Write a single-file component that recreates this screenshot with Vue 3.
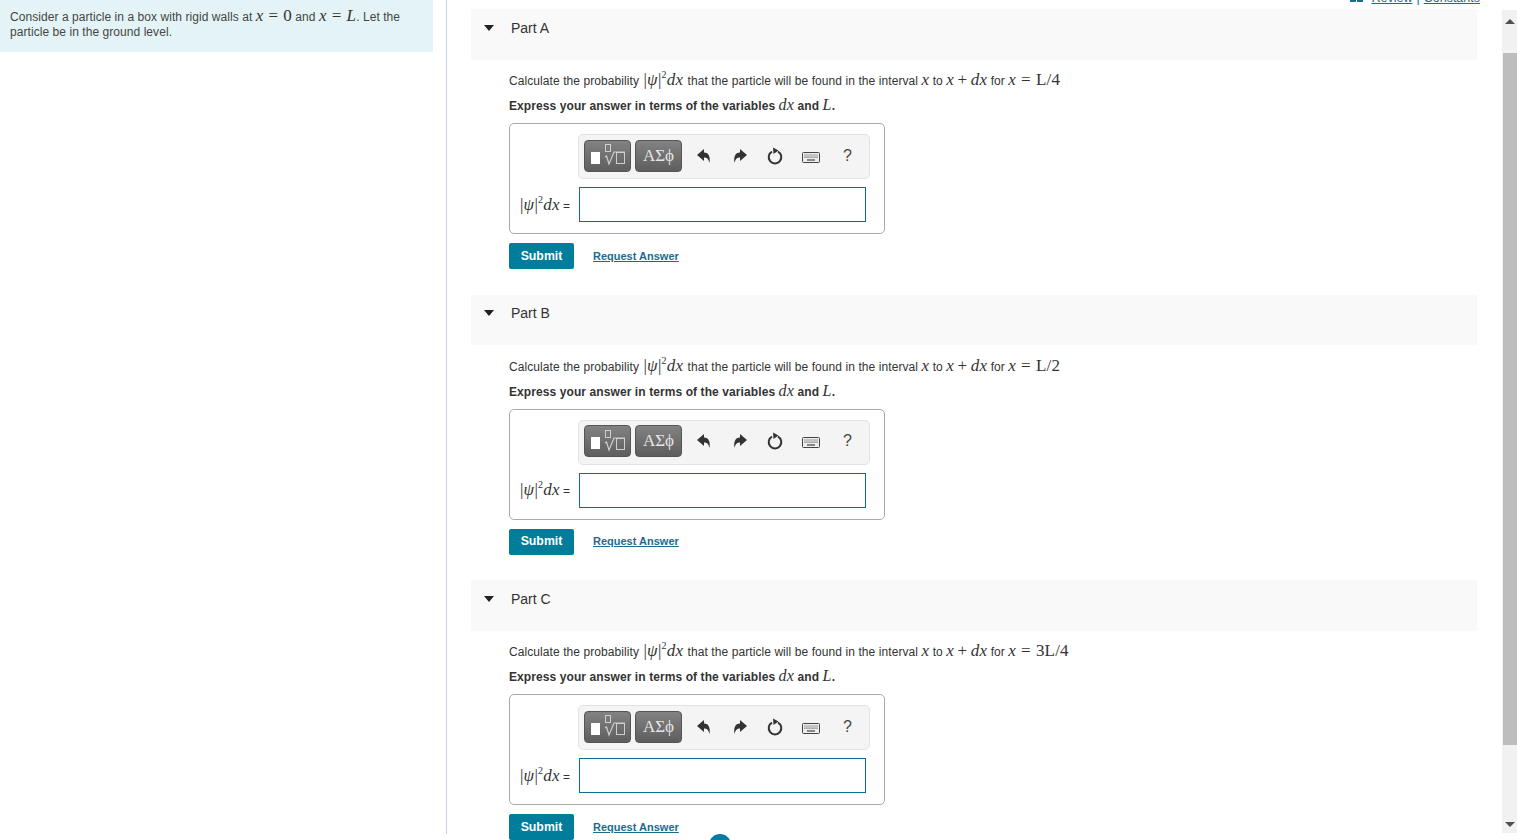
<script setup>
const parts = [
  { label: 'Part A', value: 'L/4' },
  { label: 'Part B', value: 'L/2' },
  { label: 'Part C', value: '3L/4' },
]
</script>

<template>
  <div class="page">
    <aside class="left">
      <div class="intro">
        Consider a particle in a box with rigid walls at
        <span class="m"><i>x</i><span class="op eq">=</span>0</span> and
        <span class="m"><i>x</i><span class="op eq">=</span><i>L</i></span>. Let the
        particle be in the ground level.
      </div>
    </aside>

    <main class="right">
      <div class="toplinks">
        <svg class="book" width="13" height="8" viewBox="0 0 13 8"><path d="M0 1h6v7H0zM7 1h6v7H7z" fill="#1a6d8c" /></svg>
        <a>Review</a><span class="sep">|</span><a>Constants</a>
      </div>

      <section v-for="part in parts" :key="part.label" class="part">
        <header class="part-head">
          <span class="caret"></span>
          <span class="part-title">{{ part.label }}</span>
        </header>

        <div class="part-body">
          <p class="question">
            Calculate the probability
            <span class="m big">|<i>ψ</i>|<sup>2</sup><i>dx</i></span>
            that the particle will be found in the interval
            <span class="m"><i>x</i></span> to
            <span class="m"><i>x</i><span class="op">+</span><i>dx</i></span> for
            <span class="m"><i>x</i><span class="op eq">=</span>{{ part.value }}</span>
          </p>
          <p class="express">
            Express your answer in terms of the variables
            <span class="m"><i>dx</i></span> and <span class="m"><i>L</i></span>.
          </p>

          <div class="answer-box">
            <div class="toolbar">
              <button class="tool-btn templ">
                <span class="white-sq"></span>
                <svg width="26" height="25" viewBox="0 0 26 25" fill="none" stroke="#cfcfcf">
                  <rect x="5.500" y="1.500" width="5" height="7" />
                  <path d="M5 14l1.500-1 2.500 8 5-12h11" stroke-width="1.200" />
                  <rect x="16.500" y="9.500" width="8" height="11" />
                </svg>
              </button>
              <button class="tool-btn greek">ΑΣϕ</button>

              <svg class="ic undo" width="14" height="14" viewBox="0 0 14 14"><path d="M7 0L0 6l7 6V8.500c2.500 0 4.500 1 5.500 5.500 1-5.500-.5-10.500-5.500-10.500z" fill="#333" /></svg>
              <svg class="ic redo" width="14" height="14" viewBox="0 0 14 14"><path d="M7 0l7 6-7 6V8.500c-2.500 0-4.500 1-5.500 5.500C.5 8.500 2 3.500 7 3.500z" fill="#333" /></svg>
              <svg class="ic reset" width="16" height="18" viewBox="0 0 16 18" fill="none">
                <path d="M5 4.600A6.300 6.300 0 1 0 11 4.600" stroke="#333" stroke-width="2" />
                <path d="M6 0.500L11.500 3.500 6.500 7z" fill="#333" />
              </svg>
              <svg class="ic keys" width="18" height="11" viewBox="0 0 18 11">
                <rect x="0.500" y="0.500" width="17" height="10" rx="1" fill="#eee" stroke="#444" />
                <path d="M2.500 3h13M2.500 5.200h13" stroke="#444" stroke-width="1.200" stroke-dasharray="1 1" />
                <path d="M5 8h8" stroke="#444" stroke-width="1.200" />
              </svg>
              <span class="help">?</span>
            </div>

            <div class="answer-row">
              <span class="answer-label"><span class="m">|<i>ψ</i>|<sup>2</sup><i>dx</i></span> =</span>
              <input class="answer-input" type="text" />
            </div>
          </div>

          <div class="actions">
            <button class="submit">Submit</button>
            <a class="request">Request Answer</a>
          </div>
        </div>
      </section>
    </main>

    <div class="scrollbar">
      <span class="arrow up"></span>
      <div class="track"><div class="thumb"></div></div>
      <span class="arrow down"></span>
    </div>

    <span class="chat-dot"></span>
  </div>
</template>

<style>
html, body {
  margin: 0;
  overflow: hidden;
  background: #fff;
}
</style>

<style scoped>
.page {
  position: relative;
  display: flex;
  height: 840px;
  overflow: hidden;
  font-family: "Liberation Sans", Arial, sans-serif;
  font-size: 12px;
  color: #333;
}
.left {
  box-sizing: border-box;
  width: 447px;
  height: 834px;
  flex: none;
  border-right: 1px solid #c7d2e0;
}
.intro {
  box-sizing: border-box;
  width: 433px;
  height: 52px;
  padding: 10px 10px 0;
  background: #e4f4f6;
  line-height: 15px;
  letter-spacing: 0.06px;
  color: #444;
}
.m {
  font-family: "Liberation Serif", "DejaVu Serif", serif;
  font-size: 17px;
  line-height: 0;
  letter-spacing: 0.2px;
  color: #333;
}
.m sup {
  font-size: 10px;
  line-height: 0;
}
.op {
  margin: 0 3.500px;
}
.op.eq {
  margin: 0 5px;
}
.big {
  margin: 0 1px;
}
.right {
  width: 1006px;
  margin-left: 24px;
  flex: none;
}
.toplinks {
  display: flex;
  justify-content: flex-end;
  align-items: center;
  gap: 4px;
  height: 14px;
  margin: -9px -3px 4.300px 0;
  font-size: 12.500px;
  color: #1a6d8c;
}
.toplinks a {
  text-decoration: underline;
}
.book {
  margin-right: 4px;
}
.part {
  height: 285.500px;
}
.part-head {
  display: flex;
  align-items: center;
  box-sizing: border-box;
  height: 50.500px;
  padding: 0 0 14px 13px;
  background: #f9f9f9;
}
.caret {
  width: 0;
  height: 0;
  border-left: 5.500px solid transparent;
  border-right: 5.500px solid transparent;
  border-top: 6px solid #222;
}
.part-title {
  margin-left: 17px;
  font-size: 14px;
}
.part-body {
  padding-left: 38px;
}
.question {
  margin: 0;
  padding-top: 13.500px;
  height: 25px;
  line-height: 17px;
  letter-spacing: 0.08px;
}
.express {
  margin: 0;
  height: 18px;
  font-weight: bold;
  font-size: 12px;
  line-height: 17px;
  letter-spacing: 0.09px;
}
.express .m {
  font-size: 16px;
  font-weight: normal;
}
.answer-box {
  box-sizing: border-box;
  width: 376px;
  height: 111px;
  margin-top: 7px;
  padding: 10px 18px 0 0;
  border: 1px solid #aaa;
  border-radius: 5px;
}
.toolbar {
  display: flex;
  align-items: center;
  box-sizing: border-box;
  width: 292px;
  height: 45px;
  margin-left: 68px;
  padding: 0 0 2px 5px;
  background: #f4f4f4;
  border: 1px solid #e2e2e2;
  border-radius: 5px;
}
.tool-btn {
  display: flex;
  align-items: center;
  justify-content: center;
  box-sizing: border-box;
  height: 32px;
  padding: 0;
  border: 1px solid #555;
  border-radius: 4px;
  background: linear-gradient(#828282, #5e5e5e);
  color: #e6e6e6;
}
.templ {
  width: 47px;
  margin-right: 4px;
}
.white-sq {
  width: 9px;
  height: 12px;
  margin: 4px 0 0 1px;
  background: #fff;
}
.greek {
  width: 47px;
  font-family: "Liberation Serif", serif;
  font-size: 17px;
}
.ic {
  flex: none;
}
.undo {
  margin-left: 15px;
}
.redo {
  margin-left: 22px;
}
.reset {
  margin-left: 20px;
}
.keys {
  margin: 3px 0 0 19px;
}
.help {
  margin-left: 23px;
  font-size: 16px;
  color: #444;
}
.answer-row {
  display: flex;
  align-items: center;
  margin-top: 8px;
}
.answer-label {
  width: 69px;
  padding: 2px 0 0 10px;
  box-sizing: border-box;
  white-space: nowrap;
}
.answer-input {
  box-sizing: border-box;
  width: 287px;
  height: 35px;
  border: 1px solid #0d6f8f;
  outline: none;
}
.actions {
  display: flex;
  align-items: center;
  margin-top: 9px;
}
.submit {
  width: 65px;
  height: 26px;
  padding: 0 0 1px;
  border: none;
  border-radius: 2px;
  background: #007d9b;
  color: #fff;
  font-family: inherit;
  font-size: 12.300px;
  font-weight: bold;
}
.request {
  margin: 0 0 1px 19px;
  color: #1a6d8c;
  font-weight: bold;
  font-size: 11px;
  text-decoration: underline;
}
.scrollbar {
  position: absolute;
  top: 10px;
  right: 0;
  display: flex;
  flex-direction: column;
  box-sizing: border-box;
  width: 15px;
  height: 823px;
  padding-left: 1px;
  background: #f1f1f1;
}
.arrow {
  flex: none;
  display: flex;
  align-items: center;
  justify-content: center;
}
.arrow.up {
  height: 23px;
}
.arrow.down {
  height: 17px;
}
.arrow::before {
  content: "";
  border-left: 5px solid transparent;
  border-right: 5px solid transparent;
}
.arrow.up::before {
  border-bottom: 5px solid #505050;
}
.arrow.down::before {
  border-top: 5px solid #505050;
}
.track {
  flex: 1;
}
.thumb {
  height: 692px;
  margin-top: 20px;
  background: #bdbdbd;
}
.chat-dot {
  position: absolute;
  left: 709px;
  top: 834px;
  width: 22px;
  height: 22px;
  border-radius: 50%;
  background: #007d9b;
}
</style>
